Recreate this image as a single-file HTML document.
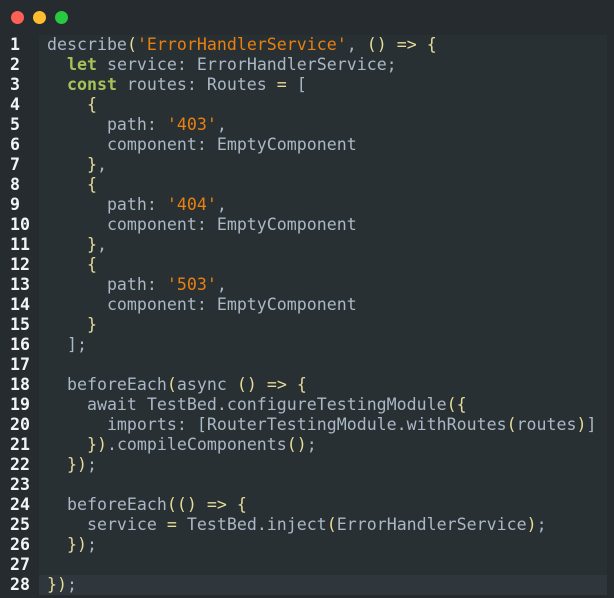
<!DOCTYPE html>
<html><head><meta charset="utf-8"><style>
html,body{margin:0;padding:0;background:#252b2e;width:614px;height:598px;overflow:hidden}
.dots{position:absolute;top:11px;left:11px}
.dots span{position:absolute;width:13px;height:13px;border-radius:50%;top:0}
.code{position:absolute;left:39px;top:35px;width:568px;height:560px;background:#293034}
.hl{position:absolute;left:39px;top:575px;width:568px;height:20px;background:#2f373c}
.ln{position:absolute;left:0;top:35px;width:36px;font:bold 16.6px/20px "DejaVu Sans Mono",monospace;color:#f2f4f5}
.ln div{padding-left:10px}
pre{position:absolute;left:47px;top:35px;margin:0;font:16.6px/20px "DejaVu Sans Mono",monospace;color:#aab7c4}
.y{color:#e6dc9a}.s{color:#e8800f}.k{color:#a6c35a;font-weight:bold}
</style></head><body>
<div class="dots"><span style="left:0;background:#fe5f57"></span><span style="left:22px;background:#febc2e"></span><span style="left:44px;background:#28c840"></span></div>
<div class="code"></div><div class="hl"></div>
<div class="ln"><div>1</div><div>2</div><div>3</div><div>4</div><div>5</div><div>6</div><div>7</div><div>8</div><div>9</div><div>10</div><div>11</div><div>12</div><div>13</div><div>14</div><div>15</div><div>16</div><div>17</div><div>18</div><div>19</div><div>20</div><div>21</div><div>22</div><div>23</div><div>24</div><div>25</div><div>26</div><div>27</div><div>28</div></div>
<pre>describe<span class="y">(</span><span class="s">'ErrorHandlerService'</span>, <span class="y">()</span> <span class="y">=&gt;</span> <span class="y">{</span>
  <span class="k">let</span> service: ErrorHandlerService;
  <span class="k">const</span> routes: Routes <span class="y">=</span> [
    <span class="y">{</span>
      path: <span class="s">'403'</span>,
      component: EmptyComponent
    <span class="y">}</span>,
    <span class="y">{</span>
      path: <span class="s">'404'</span>,
      component: EmptyComponent
    <span class="y">}</span>,
    <span class="y">{</span>
      path: <span class="s">'503'</span>,
      component: EmptyComponent
    <span class="y">}</span>
  ];

  beforeEach<span class="y">(</span>async <span class="y">()</span> <span class="y">=&gt;</span> <span class="y">{</span>
    await TestBed.configureTestingModule<span class="y">({</span>
      imports: [RouterTestingModule.withRoutes<span class="y">(</span>routes<span class="y">)</span>]
    <span class="y">})</span>.compileComponents<span class="y">()</span>;
  <span class="y">})</span>;

  beforeEach<span class="y">(()</span> <span class="y">=&gt;</span> <span class="y">{</span>
    service <span class="y">=</span> TestBed.inject<span class="y">(</span>ErrorHandlerService<span class="y">)</span>;
  <span class="y">})</span>;

<span class="y">})</span>;</pre>
</body></html>
